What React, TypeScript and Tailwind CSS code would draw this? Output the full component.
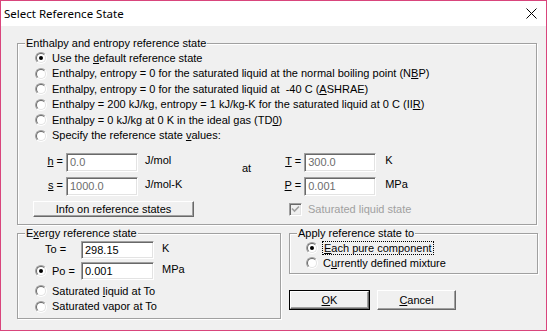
import React from "react";

function Radio({ checked }: { checked?: boolean }) {
  return (
    <span className="w-[12px] h-[12px] shrink-0 rounded-full border border-[#a0a0a0] border-r-white border-b-white flex items-center justify-center">
      <span className="w-[10px] h-[10px] rounded-full border border-[#696969] border-r-[#e3e3e3] border-b-[#e3e3e3] bg-white flex items-center justify-center">
        {checked && <span className="w-[4px] h-[4px] rounded-full bg-black" />}
      </span>
    </span>
  );
}

function Field({ value, disabled, w = "w-[72px]", h = "h-[19px]" }: { value: string; disabled?: boolean; w?: string; h?: string }) {
  return (
    <div
      className={`${w} ${h} shrink-0 bg-white border border-[#a0a0a0] border-r-white border-b-white shadow-[inset_1px_1px_0_#696969,inset_-1px_-1px_0_#e3e3e3] pl-[3px] pt-[2px] leading-[13px] ${
        disabled ? "text-[#6d6d6d]" : "text-black"
      }`}
    >
      {value}
    </div>
  );
}

function Group({ title, className, children }: { title: React.ReactNode; className: string; children: React.ReactNode }) {
  return (
    <div className={`border border-[#a0a0a0] shadow-[inset_1px_1px_0_#fff,1px_1px_0_#fff] flex flex-col ${className}`}>
      <div className="-mt-[7px] ml-[7px] px-[1px] w-fit h-[13px] leading-[13px] bg-[#f0f0f0]">{title}</div>
      {children}
    </div>
  );
}

function RadioRow({ checked, h, children, pl = "pl-[17px]" }: { checked?: boolean; h: string; children: React.ReactNode; pl?: string }) {
  return (
    <div className={`flex items-center ${h} ${pl}`}>
      <Radio checked={checked} />
      <span className="ml-[5px] leading-[13px] whitespace-nowrap">{children}</span>
    </div>
  );
}

export default function App() {
  return (
    <div className="w-[547px] h-[331px] border border-[#d9457c] bg-[#f0f0f0] flex flex-col text-[11px] text-black font-['Liberation_Sans',Arial,sans-serif] overflow-hidden select-none">
      {/* title bar */}
      <div className="h-[25px] shrink-0 bg-white flex items-center justify-between pl-[3px] pr-[9px]">
        <span className="text-[11.5px] font-['Noto_Sans','Open_Sans',sans-serif]">Select Reference State</span>
        <svg width="11" height="11" viewBox="0 0 11 11">
          <path d="M0.5 0.5 L10.5 10.5 M10.5 0.5 L0.5 10.5" stroke="#000" strokeWidth="1" />
        </svg>
      </div>

      <div className="flex flex-col pl-[16px]">
        {/* enthalpy / entropy */}
        <Group title="Enthalpy and entropy reference state" className="mt-[17px] w-[520px] h-[182px]">
          <RadioRow checked h="h-[16px]">
            Use the <u>d</u>efault reference state
          </RadioRow>
          <RadioRow h="h-[15px]">
            Enthalpy, entropy = 0 for the saturated liquid at the normal boiling point (N<u>B</u>P)
          </RadioRow>
          <RadioRow h="h-[16px]">
            Enthalpy, entropy = 0 for the saturated liquid at&nbsp; -40 C (<u>A</u>SHRAE)
          </RadioRow>
          <RadioRow h="h-[15px]">
            Enthalpy = 200 kJ/kg, entropy = 1 kJ/kg-K for the saturated liquid at 0 C (II<u>R</u>)
          </RadioRow>
          <RadioRow h="h-[16px]">
            Enthalpy = 0 kJ/kg at 0 K in the ideal gas (TD<u>0</u>)
          </RadioRow>
          <RadioRow h="h-[15px]">
            Specify the reference state <u>v</u>alues:
          </RadioRow>

          <div className="flex items-start mt-[10px]">
            <div className="flex flex-col gap-[5px] ml-[22px]">
              <div className="flex items-start">
                <span className="w-[23px] text-right mt-[2px] leading-[13px]">
                  <u>h</u> =
                </span>
                <div className="ml-[3px]">
                  <Field value="0.0" disabled />
                </div>
                <span className="ml-[7px] w-[50px] mt-[1px] leading-[13px]">J/mol</span>
              </div>
              <div className="flex items-start">
                <span className="w-[23px] text-right mt-[2px] leading-[13px]">
                  <u>s</u> =
                </span>
                <div className="ml-[3px]">
                  <Field value="1000.0" disabled />
                </div>
                <span className="ml-[7px] w-[50px] mt-[1px] leading-[13px]">J/mol-K</span>
              </div>
            </div>
            <span className="ml-[47px] mt-[9px] leading-[13px]">at</span>
            <div className="flex flex-col gap-[5px] ml-[25px]">
              <div className="flex items-start">
                <span className="w-[25px] text-right mt-[2px] leading-[13px]">
                  <u>T</u> =
                </span>
                <div className="ml-[3px]">
                  <Field value="300.0" disabled />
                </div>
                <span className="ml-[9px] mt-[1px] leading-[13px]">K</span>
              </div>
              <div className="flex items-start">
                <span className="w-[25px] text-right mt-[2px] leading-[13px]">
                  <u>P</u> =
                </span>
                <div className="ml-[3px]">
                  <Field value="0.001" disabled />
                </div>
                <span className="ml-[9px] mt-[1px] leading-[13px]">MPa</span>
              </div>
            </div>
          </div>

          <div className="flex items-center mt-[5px]">
            <div className="ml-[15px] w-[161px] h-[16px] border border-white border-r-[#696969] border-b-[#696969] shadow-[inset_-1px_-1px_0_#a0a0a0] flex items-center justify-center leading-[13px]">
              Info on reference states
            </div>
            <div className="ml-[95px] flex items-center">
              <span className="w-[13px] h-[13px] border border-[#a0a0a0] border-r-white border-b-white shadow-[inset_1px_1px_0_#696969,inset_-1px_-1px_0_#e3e3e3] bg-[#f0f0f0] flex items-center justify-center">
                <svg width="9" height="9" viewBox="0 0 9 9">
                  <path d="M1 3.5 L3.5 6 L8 1.5" stroke="#a0a0a0" strokeWidth="1.6" fill="none" />
                </svg>
              </span>
              <span className="ml-[6px] leading-[13px] text-[#a0a0a0]">Saturated liquid state</span>
            </div>
          </div>
        </Group>

        <div className="flex mt-[8px]">
          {/* exergy */}
          <Group
            title={
              <>
                E<u>x</u>ergy reference state
              </>
            }
            className="w-[264px] h-[86px]"
          >
            <div className="flex items-start mt-[1px]">
              <span className="ml-[27px] w-[36px] mt-[2px] leading-[13px]">To =</span>
              <Field value="298.15" w="w-[73px]" h="h-[18px]" />
              <span className="ml-[8px] mt-[1px] leading-[13px]">K</span>
            </div>
            <div className="flex items-center mt-[3px]">
              <span className="ml-[17px]">
                <Radio checked />
              </span>
              <span className="ml-[5px] w-[29px] leading-[13px]">Po =</span>
              <Field value="0.001" w="w-[73px]" h="h-[18px]" />
              <span className="ml-[8px] -mt-[3px] leading-[13px]">MPa</span>
            </div>
            <div className="mt-[3px]">
              <RadioRow h="h-[16px]">
                Saturated <u>l</u>iquid at To
              </RadioRow>
              <RadioRow h="h-[15px]">Saturated vapor at To</RadioRow>
            </div>
          </Group>

          <div className="ml-[8px] w-[249px] flex flex-col">
            <Group title="Apply reference state to" className="w-[249px] h-[41px]">
              <div className="flex items-center h-[15px] pl-[16px]">
                <Radio checked />
                <span className="ml-[4px] px-[1px] leading-[12px] border border-dotted border-black">
                  <u>E</u>ach pure component
                </span>
              </div>
              <RadioRow h="h-[16px]" pl="pl-[16px]">
                C<u>u</u>rrently defined mixture
              </RadioRow>
            </Group>

            <div className="flex mt-[16px]">
              <div className="w-[81px] h-[20px] border border-black">
                <div className="w-full h-full border border-white border-r-[#696969] border-b-[#696969] shadow-[inset_-1px_-1px_0_#a0a0a0] flex items-center justify-center leading-[13px]">
                  <span>
                    <u>O</u>K
                  </span>
                </div>
              </div>
              <div className="ml-[7px] w-[79px] h-[20px] border border-white border-r-[#696969] border-b-[#696969] shadow-[inset_-1px_-1px_0_#a0a0a0] flex items-center justify-center leading-[13px]">
                <span>
                  <u>C</u>ancel
                </span>
              </div>
            </div>
          </div>
        </div>
      </div>
    </div>
  );
}
